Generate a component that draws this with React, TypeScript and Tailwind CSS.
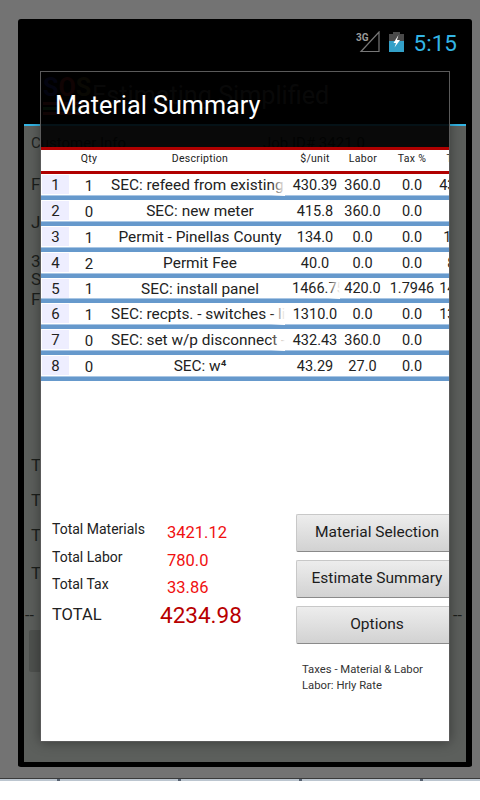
const font = { fontFamily: "Roboto, sans-serif" };

type Row = { n: number; q: number; d: string; left?: boolean; u: string; l: string; t: string; x: string; h: string; fadeU?: boolean };
const rows: Row[] = [
  { n: 1, q: 1, d: "SEC: refeed from existing conduit", left: true, u: "430.39", l: "360.0", t: "0.0", x: "430.39", h: "h-[26px]" },
  { n: 2, q: 0, d: "SEC: new meter", u: "415.8", l: "360.0", t: "0.0", x: "", h: "h-[26px]" },
  { n: 3, q: 1, d: "Permit - Pinellas County", u: "134.0", l: "0.0", t: "0.0", x: "134.0", h: "h-[26px]" },
  { n: 4, q: 2, d: "Permit Fee", u: "40.0", l: "0.0", t: "0.0", x: "80.0", h: "h-[26px]" },
  { n: 5, q: 1, d: "SEC: install panel", u: "1466.75", l: "420.0", t: "1.7946", x: "1466.7", h: "h-[25px]", fadeU: true },
  { n: 6, q: 1, d: "SEC: recpts. - switches - lights", left: true, u: "1310.0", l: "0.0", t: "0.0", x: "1310.0", h: "h-[26px]" },
  { n: 7, q: 0, d: "SEC: set w/p disconnect - breaker", left: true, u: "432.43", l: "360.0", t: "0.0", x: "", h: "h-[26px]" },
  { n: 8, q: 0, d: "SEC: w⁴", u: "43.29", l: "27.0", t: "0.0", x: "", h: "h-[26px]" },
];

function Btn({ label }: { label: string }) {
  return (
    <div className="flex h-[38px] w-[161px] shrink-0 items-center justify-center rounded-l-[2px] border border-r-0 border-[#c8c8c8] border-b-[#8a8a8a] bg-gradient-to-b from-[#ededed] to-[#d2d2d2] text-[15.5px] text-[#1c1c1c]">
      {label}
    </div>
  );
}

function Ghost() {
  return (
    <div className="absolute inset-0 text-[#1c1f1c]" style={font}>
      <div className="absolute left-[31px] top-[134px] text-[15px] leading-[18px]">Customer Info</div>
      <div className="absolute left-[263px] top-[134px] text-[15px] leading-[18px]">Job ID# 3421.0</div>
      <div className="absolute left-[31px] top-[174px] text-[17px] leading-[20px]">F</div>
      <div className="absolute left-[31px] top-[212px] text-[17px] leading-[20px]">J</div>
      <div className="absolute left-[31px] top-[251px] text-[17px] leading-[20px]">3</div>
      <div className="absolute left-[31px] top-[269px] text-[17px] leading-[20px]">S</div>
      <div className="absolute left-[31px] top-[289px] text-[17px] leading-[20px]">F</div>
      <div className="absolute left-[31px] top-[455px] text-[17px] leading-[20px]">T</div>
      <div className="absolute left-[31px] top-[490px] text-[17px] leading-[20px]">T</div>
      <div className="absolute left-[31px] top-[525px] text-[17px] leading-[20px]">T</div>
      <div className="absolute left-[31px] top-[563px] text-[17px] leading-[20px]">T</div>
      <div className="absolute left-[25px] top-[606px] text-[16px] leading-[20px]">--</div>
      <div className="absolute left-[453px] top-[606px] text-[16px] leading-[20px]">--</div>
      <div className="absolute left-[29px] top-[630px] h-[42px] w-[14px] rounded-[2px] bg-[#4e514e]" />
    </div>
  );
}

export default function App() {
  return (
    <div className="relative h-[800px] w-[480px] overflow-hidden bg-white" style={font}>
      <div className="h-[778px] bg-[#737373] pl-[18px] pr-[8px] pt-[19px]">
        <div className="flex h-[748px] flex-col rounded-[3px] border-b-[5px] border-l-[6px] border-r-[6px] border-black bg-black">
          <div className="flex h-[48px] shrink-0 items-center justify-end gap-[10px] pr-[9px]">
            <svg width="26" height="22" viewBox="0 0 26 22" className="mb-[2px] mr-[-1px]">
              <path d="M25 1 L25 20.5 L7 20.5 Z" fill="none" stroke="#777" strokeWidth="1.2" />
              <text x="2" y="9.5" fontSize="10" fontWeight="700" fill="#9a9a9a" fontFamily="Roboto, sans-serif">3G</text>
            </svg>
            <svg width="15" height="20" viewBox="0 0 15 20" className="mb-[2px]">
              <rect x="4" y="0" width="7" height="2" fill="#4a4a4a" />
              <rect x="0" y="2" width="15" height="7" fill="#4a4a4a" />
              <rect x="0" y="9" width="15" height="11" fill="#33a0c8" />
              <path d="M9.5 3 L4.5 11 L7 11 L5.5 15.5 L11 8 L8 8 Z" fill="#fff" />
            </svg>
            <span className="text-[22.5px] leading-none text-[#33b5e5]">5:15</span>
          </div>
          <div className="flex h-[57px] shrink-0 items-center pl-[19px]">
            <div className="flex w-[49px] shrink-0 flex-col">
              <div className="flex text-[25px] font-bold leading-[22px]">
                <span className="text-[#2030a0]">S</span>
                <span className="text-[#a02020]">O</span>
                <span className="text-[#605020]">S</span>
              </div>
              <div className="mt-[3px] h-[3px] w-[40px] bg-[#a03030]" />
              <div className="mt-[2px] h-[3px] w-[40px] bg-[#308040]" />
              <div className="mt-[2px] h-[3px] w-[40px] bg-[#a03030]" />
            </div>
            <span className="text-[25.2px] leading-none text-[#555]">Estimating Simplified</span>
          </div>
          <div className="flex-1 border-t-[2px] border-[#33b5e5] bg-[#5c5f5c]" />
        </div>
      </div>
      <div className="flex h-[3px] gap-[118px] border-t border-[#3a3a3a] bg-[#bcc6d0] pl-[57px]">
        <div className="h-[2px] w-[3px] bg-[#556070]" />
        <div className="h-[2px] w-[3px] bg-[#556070]" />
        <div className="h-[2px] w-[3px] bg-[#556070]" />
        <div className="h-[2px] w-[3px] bg-[#556070]" />
      </div>

      <Ghost />

      <div className="absolute left-[40px] top-[71px] flex h-[671px] w-[410px] flex-col overflow-hidden border border-[#5a5a5a] shadow-[0_0_12px_rgba(0,0,0,0.4)]">
        <div className="flex h-[75px] shrink-0 items-center bg-black/90 pb-[8px] pl-[14px] text-[25.2px] text-white">Material Summary</div>
        <div className="flex flex-1 flex-col bg-white">
          <div className="h-[3px] shrink-0 bg-[#b00000]" />
          <div className="flex h-[21px] shrink-0 items-center bg-white pb-[2px] text-[10.5px] leading-none tracking-[0.3px] text-[#222]">
            <div className="w-[28px] shrink-0" />
            <div className="w-[40px] shrink-0 text-center">Qty</div>
            <div className="w-[182px] shrink-0 text-center">Description</div>
            <div className="w-[48px] shrink-0 text-center">$/unit</div>
            <div className="w-[48px] shrink-0 text-center">Labor</div>
            <div className="w-[50px] shrink-0 text-center">Tax %</div>
            <div className="w-[44px] shrink-0 text-center">Total</div>
          </div>
          <div className="h-[3px] shrink-0 bg-[#b00000]" />
          {rows.map((r) => (
            <div key={r.n} className={`flex ${r.h} shrink-0 flex-col`}>
              <div className="flex min-h-0 flex-1 items-center pt-[3px] text-[14.5px] leading-none text-[#222]">
                <div className="ml-[1px] mt-[-2px] flex h-[19px] w-[27px] shrink-0 items-center justify-center self-start bg-[#eeeeff] pt-[2px] text-[15px]">{r.n}</div>
                <div className="w-[40px] shrink-0 text-center text-[15px]">{r.q}</div>
                <div className={`relative w-[176px] shrink-0 overflow-hidden whitespace-nowrap py-[2px] text-[15.4px] ${r.left ? "pl-[2px] text-left" : "pl-[6px] text-center"}`}>
                  {r.d}
                  {r.left ? <div className="absolute inset-y-0 right-0 w-[14px] bg-gradient-to-r from-white/0 to-white" /> : null}
                </div>
                <div className={`relative ml-[5px] w-[50px] shrink-0 overflow-hidden whitespace-nowrap py-[2px] ${r.fadeU ? "pl-[2px] text-left" : "text-center"}`}>
                  {r.u}
                  {r.fadeU ? <div className="absolute inset-y-0 right-0 w-[12px] bg-gradient-to-r from-white/0 to-white" /> : null}
                </div>
                <div className="w-[45px] shrink-0 text-center">{r.l}</div>
                <div className="ml-[1px] w-[52px] shrink-0 whitespace-nowrap text-center">{r.t}</div>
                <div className="w-[47px] shrink-0 whitespace-nowrap text-center">{r.x}</div>
              </div>
              <div className="h-[5px] shrink-0 border-t border-[#a9c6e4] bg-[#6699cc]" />
            </div>
          ))}
          <div className="mt-auto flex items-start justify-between pb-[47px]">
            <div className="mt-[5px] flex w-[254px] shrink-0 flex-col pl-[11px]">
              <Total label="Total Materials" value="3421.12" />
              <Total label="Total Labor" value="780.0" />
              <Total label="Total Tax" value="33.86" />
              <div className="mt-[1px] flex text-[#222]">
                <div className="w-[108px] shrink-0 text-[16.5px]">TOTAL</div>
                <div className="mt-[-4px] text-[22.5px] text-[#b80000]">4234.98</div>
              </div>
            </div>
            <div className="flex w-[153px] shrink-0 flex-col">
              <div className="flex flex-col gap-[8px]">
                <Btn label="Material Selection" />
                <Btn label="Estimate Summary" />
                <Btn label="Options" />
              </div>
              <div className="mt-[18px] pl-[6px] text-[11.3px] leading-[16px] text-[#333]">
                <div>Taxes - Material &amp; Labor</div>
                <div>Labor: Hrly Rate</div>
              </div>
            </div>
          </div>
        </div>
      </div>
    </div>
  );
}

function Total({ label, value }: { label: string; value: string }) {
  return (
    <div className="flex h-[27.5px] items-start">
      <div className="w-[115px] shrink-0 text-[14px] text-[#222]">{label}</div>
      <div className="mt-[2px] text-[16.5px] text-[#f01010]">{value}</div>
    </div>
  );
}
